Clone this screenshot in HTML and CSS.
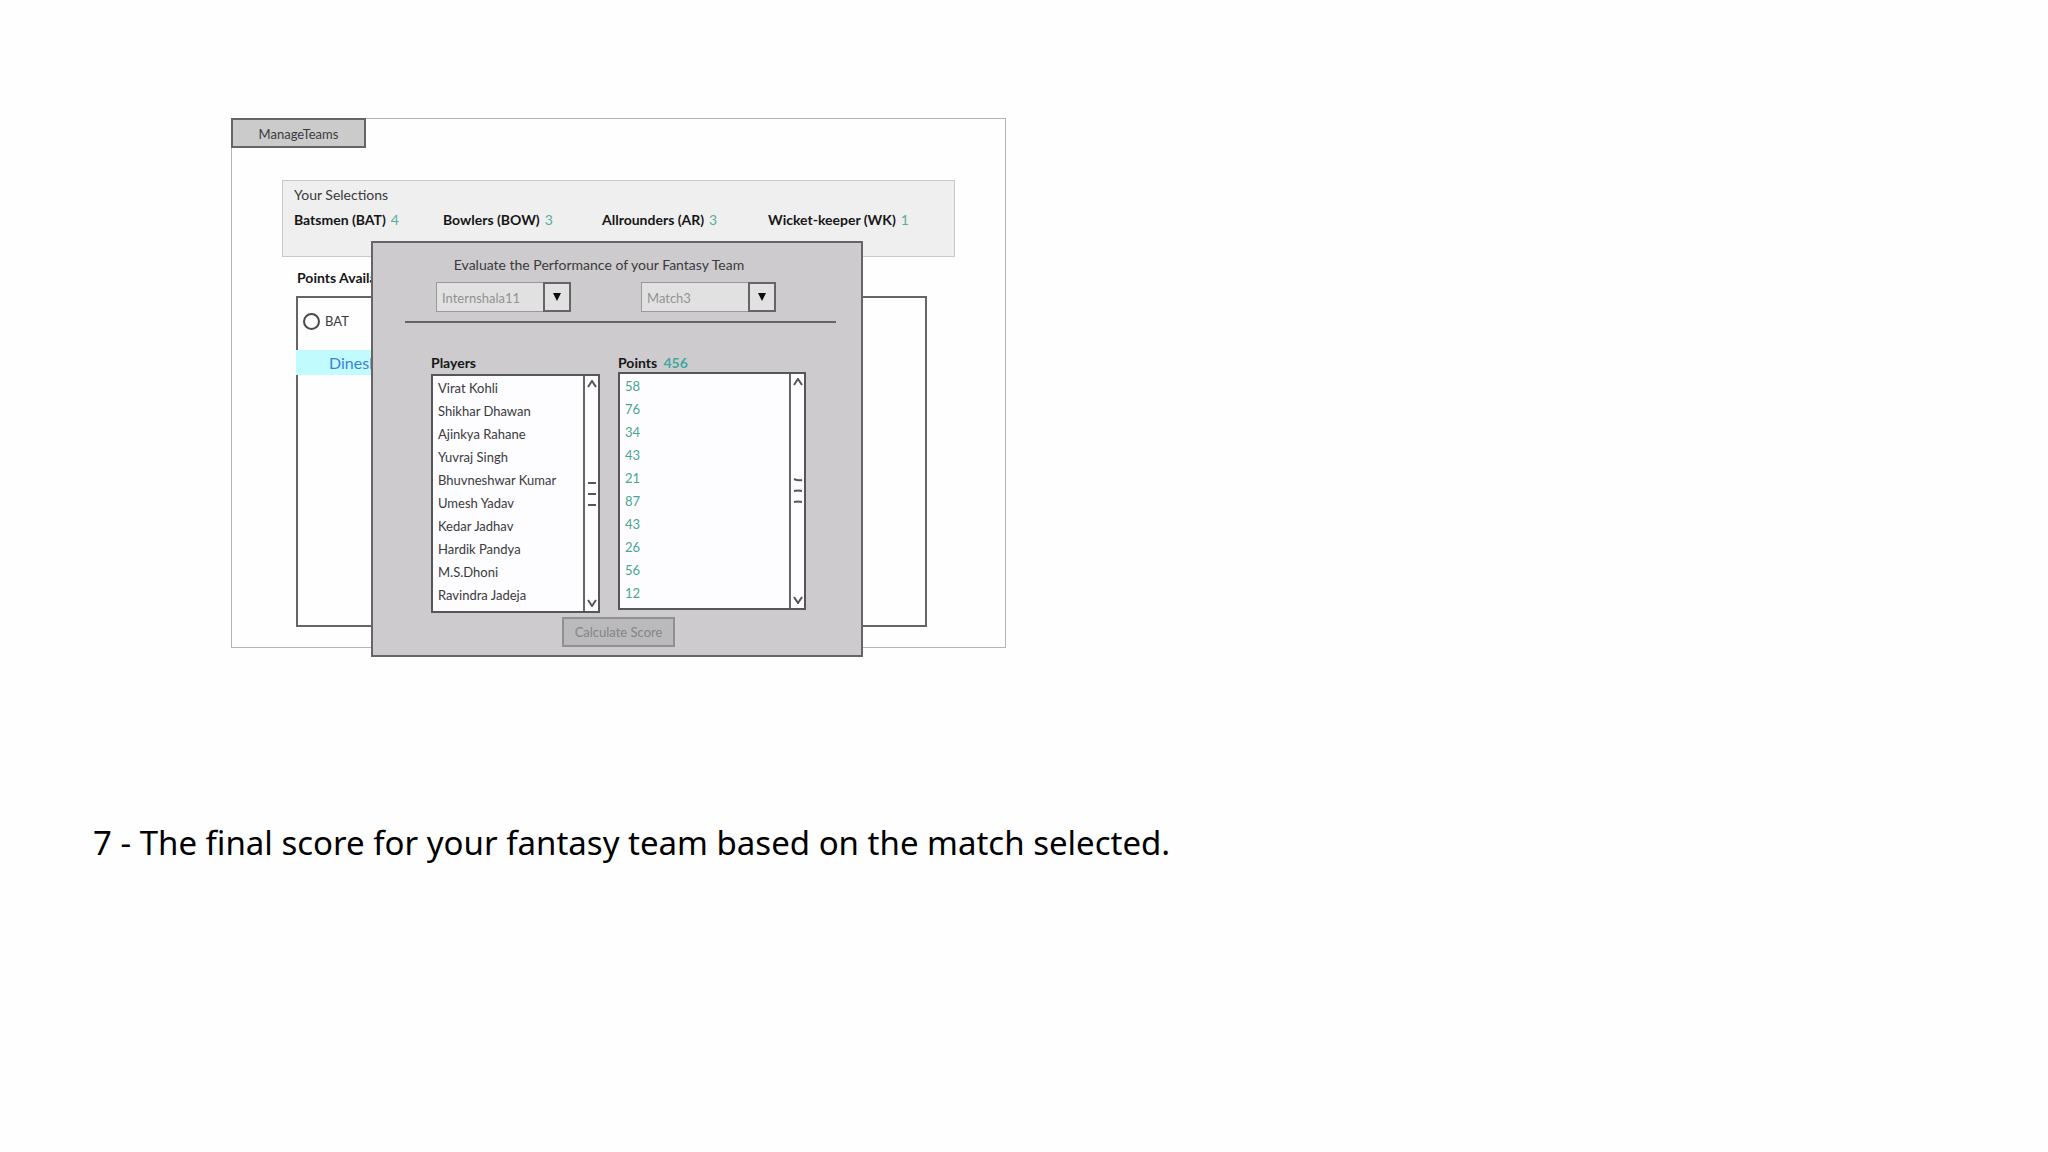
FILE: index.html
```html
<!DOCTYPE html>
<html lang="en">
<head>
<meta charset="utf-8">
<meta name="viewport" content="width=device-width, initial-scale=1">
<title>Fantasy Team – Evaluate Score</title>
<link rel="stylesheet" href="styles.css">
</head>
<body>
<main class="slide">
  <section class="window">
    <button class="tab" type="button">ManageTeams</button>

    <section class="selections">
      <h2 class="selections-title">Your Selections</h2>
      <dl class="counts">
        <div class="count"><dt>Batsmen (BAT)</dt><dd>4</dd></div>
        <div class="count"><dt>Bowlers (BOW)</dt><dd>3</dd></div>
        <div class="count"><dt>Allrounders (AR)</dt><dd>3</dd></div>
        <div class="count"><dt>Wicket-keeper (WK)</dt><dd>1</dd></div>
      </dl>
    </section>

    <section class="available">
      <h2 class="available-title">Points Available</h2>
      <div class="available-box">
        <label class="role"><input class="role-radio" type="radio" name="role">BAT</label>
        <div class="picked">Dinesh</div>
      </div>
    </section>

    <section class="dialog" role="dialog" aria-labelledby="dialog-title">
      <h1 class="dialog-title" id="dialog-title">Evaluate the Performance of your Fantasy Team</h1>
      <div class="pickers">
        <div class="picker">
          <select class="picker-select" aria-label="Team" disabled><option>Internshala11</option></select>
          <span class="picker-arrow"><svg width="10" height="10" viewBox="0 0 10 10"><path d="M1 1H9L5 9Z"/></svg></span>
        </div>
        <div class="picker">
          <select class="picker-select" aria-label="Match" disabled><option>Match3</option></select>
          <span class="picker-arrow"><svg width="10" height="10" viewBox="0 0 10 10"><path d="M1 1H9L5 9Z"/></svg></span>
        </div>
      </div>
      <hr class="rule">
      <div class="lists">
        <section class="column players">
          <h2 class="column-title">Players</h2>
          <div class="listbox">
            <ul class="items">
              <li>Virat Kohli</li><li>Shikhar Dhawan</li><li>Ajinkya Rahane</li><li>Yuvraj Singh</li><li>Bhuvneshwar Kumar</li>
              <li>Umesh Yadav</li><li>Kedar Jadhav</li><li>Hardik Pandya</li><li>M.S.Dhoni</li><li>Ravindra Jadeja</li>
            </ul>
            <div class="scrollbar">
              <svg width="10" height="8" viewBox="0 0 10 8"><path d="M1 7L5 1L9 7"/></svg>
              <svg width="10" height="26" viewBox="0 0 10 26"><path d="M1 2H9M1 13H9M1 24H9"/></svg>
              <svg width="10" height="8" viewBox="0 0 10 8"><path d="M1 1L5 7L9 1"/></svg>
            </div>
          </div>
        </section>
        <section class="column points">
          <h2 class="column-title">Points <span class="total">456</span></h2>
          <div class="listbox">
            <ul class="items">
              <li>58</li><li>76</li><li>34</li><li>43</li><li>21</li>
              <li>87</li><li>43</li><li>26</li><li>56</li><li>12</li>
            </ul>
            <div class="scrollbar">
              <svg width="10" height="8" viewBox="0 0 10 8"><path d="M1 7L5 1L9 7"/></svg>
              <svg width="10" height="26" viewBox="0 0 10 26"><path d="M1 1Q5 3 9 2M1 13Q5 12 9 13M1 24Q5 23 9 24"/></svg>
              <svg width="10" height="8" viewBox="0 0 10 8"><path d="M1 1L5 7L9 1"/></svg>
            </div>
          </div>
        </section>
      </div>
      <button class="calculate" type="button" disabled>Calculate Score</button>
    </section>
  </section>

  <p class="caption">7 - The final score for your fantasy team based on the match selected.</p>
</main>
</body>
</html>
```
FILE: styles.css
```css
* { box-sizing: border-box; }

body {
  margin: 0;
  background: #fefefe;
  color: #3a3a3c;
  font: 14px/20px Lato, "Noto Sans", sans-serif;
}

h1, h2, dl, dd, ul, p { margin: 0; padding: 0; }
h1, h2 { font: inherit; }
ul { list-style: none; }
button, select, input { font: inherit; color: inherit; margin: 0; }

.slide { padding: 118px 93px 0; }

.window {
  position: relative;
  max-width: 775px;
  margin-left: 138px;
  padding-bottom: 20px;
  border: 1px solid #b4b4b6;
}

.tab {
  display: block;
  width: 135px;
  height: 30px;
  margin: -1px 0 0 -1px;
  padding: 2px 0 0;
  border: 2px solid #656567;
  background: #cccbcc;
  font-size: 13px;
}

.selections {
  height: 77px;
  margin: 32px 50px 0 50px;
  padding: 4px 11px;
  border: 1px solid #c8c8ca;
  background: #efefef;
}

.counts {
  display: grid;
  grid-template-columns: 149px 159px 166px 1fr;
  margin-top: 5px;
  white-space: nowrap;
}

.count { display: flex; gap: 5px; }
.count dt { color: #161618; font-weight: bold; }
.count dd { color: #58ad9b; }

.available { margin: 11px 78px 0 64px; }
.available-title { padding-left: 1px; color: #161618; font-weight: bold; }

.available-box {
  height: 331px;
  margin-top: 8px;
  padding-top: 13px;
  border: 2px solid #656567;
}

.role { display: flex; align-items: center; gap: 5px; padding-left: 5px; font-size: 13px; }

.role-radio {
  appearance: none;
  width: 17px;
  height: 17px;
  border: 2px solid #4a4a4c;
  border-radius: 50%;
}

.picked {
  width: 120px;
  margin: 19px 0 0 -2px;
  padding-left: 33px;
  background: #c2fbfd;
  color: #3d7fd6;
  font-size: 16px;
  line-height: 25px;
}

/* The dialog lies over the team window and reaches past its lower edge. */
.dialog {
  position: absolute;
  top: 122px;
  left: 139px;
  width: 492px;
  padding: 12px 25px 8px 32px;
  border: 2px solid #656567;
  background: #cdcbcd;
}

.dialog-title { padding-right: 43px; text-align: center; }

.pickers { display: flex; gap: 70px; margin-top: 7px; padding-left: 31px; }
.picker { display: flex; width: 135px; height: 30px; }

.picker-select {
  appearance: none;
  flex: 1;
  min-width: 0;
  padding: 2px 5px 0;
  border: 1px solid #99989a;
  border-right: 0;
  border-radius: 0;
  background: #e2e1e2;
  color: #929194;
  font-size: 13px;
  opacity: 1;
}

.picker-arrow {
  display: grid;
  place-items: center;
  width: 28px;
  border: 2px solid #656567;
  background: #e2e1e2;
}

.picker-arrow path { fill: #0c0c0e; }

.rule { height: 2px; margin: 9px 0 0; border: 0; background: #656567; }

.lists { display: flex; gap: 18px; margin-top: 30px; padding-left: 26px; }
.column-title { color: #161618; font-weight: bold; }
.total { margin-left: 3px; color: #3fa9a2; }

.listbox { display: flex; margin-top: -1px; border: 2px solid #565658; background: #fdfcfe; }
.items { flex: 1; padding: 1px 6px 4px 5px; font-size: 13px; line-height: 23px; white-space: nowrap; }
.players .listbox { width: 169px; margin-top: 1px; }
.points .listbox { width: 188px; }
.points .items { padding-bottom: 3px; color: #47a591; }

.scrollbar {
  display: flex;
  flex-direction: column;
  align-items: center;
  justify-content: space-between;
  width: 15px;
  padding: 4px 0;
  border-left: 2px solid #656567;
}

.scrollbar path { fill: none; stroke: #565658; stroke-width: 2; }

.calculate {
  display: block;
  width: 113px;
  height: 30px;
  margin: 4px 0 0 157px;
  padding: 0;
  border: 2px solid #908f92;
  background: #bab9bb;
  color: #858487;
  font-size: 13px;
}

.caption {
  margin-top: 171px;
  color: #000;
  font: 33px/48px "Noto Sans", sans-serif;
}
```
